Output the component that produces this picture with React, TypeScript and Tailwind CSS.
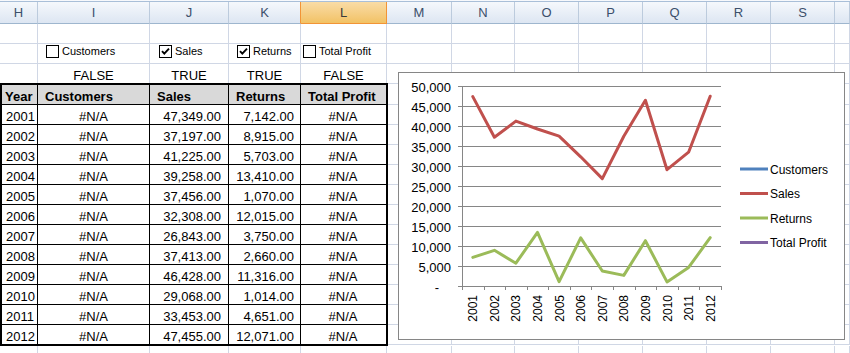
import React from "react";

const COL_W = ["w-[38px]", "w-[112px]", "w-[79px]", "w-[72px]", "w-[86px]", "w-[65px]", "w-[63px]", "w-[64px]", "w-[64px]", "w-[64px]", "w-[64px]", "w-[64px]", "w-[15px]"];
const LETTERS = ["H", "I", "J", "K", "L", "M", "N", "O", "P", "Q", "R", "S", ""];
// columns M..T next to the table block
const RIGHT_W = ["w-[64px]", "w-[63px]", "w-[64px]", "w-[64px]", "w-[64px]", "w-[64px]", "w-[64px]", "w-[15px]"];

const YEARS = [2001, 2002, 2003, 2004, 2005, 2006, 2007, 2008, 2009, 2010, 2011, 2012];
const SALES = [47349, 37197, 41225, 39258, 37456, 32308, 26843, 37413, 46428, 29068, 33453, 47455];
const RETURNS = [7142, 8915, 5703, 13410, 1070, 12015, 3750, 2660, 11316, 1014, 4651, 12071];

const money = (n: number) => n.toLocaleString("en-US", { minimumFractionDigits: 2, maximumFractionDigits: 2 });

function ColumnHeaders() {
    return (
        <div className="bg-[#f7f9fc] pt-px">
            <div className="flex h-[23px] border-t border-[#a9bfd8]">
                {LETTERS.map((l, i) => {
                    const selected = l === "L";
                    const beforeSel = l === "K";
                    return (
                        <div
                            key={i}
                            className={`${COL_W[i]} flex shrink-0 items-center justify-center border-b border-r text-[13px] ${
                                selected
                                    ? "border-[#f29436] bg-linear-to-b from-[#f9dca6] to-[#f2c264] text-[#3a3a3a]"
                                    : beforeSel
                                      ? "border-b-[#9eb6ce] border-r-[#f29436] bg-linear-to-b from-[#f5f8fc] to-[#dde6f2] text-[#3b4f6b]"
                                      : "border-b-[#9eb6ce] border-r-[#bccbdd] bg-linear-to-b from-[#f5f8fc] to-[#dde6f2] text-[#3b4f6b]"
                            }`}
                        >
                            {l}
                        </div>
                    );
                })}
            </div>
        </div>
    );
}

function Checkbox({ checked, label }: { checked: boolean; label: string }) {
    return (
        <div className="flex items-start">
            <div className="flex h-[13px] w-[13px] shrink-0 items-center justify-center border border-black bg-white">
                {checked && (
                    <svg width="11" height="11" viewBox="0 0 11 11">
                        <path d="M2 5.2 L4.3 7.6 L9 2.6" fill="none" stroke="#000" strokeWidth="1.9" />
                    </svg>
                )}
            </div>
            <span className="ml-[3px] whitespace-nowrap text-[11px] leading-[13px] text-black">{label}</span>
        </div>
    );
}

function EmptyRow({ widths, className }: { widths: string[]; className: string }) {
    return (
        <div className="flex">
            {widths.map((w, i) => (
                <div key={i} className={`${w} shrink-0 border-r border-[#d0d7e5] ${className}`} />
            ))}
        </div>
    );
}

function DataTable() {
    const cell = "flex shrink-0 items-end border-r border-black leading-[14px]";
    return (
        <div className="w-[388px] shrink-0 border-2 border-black text-[13px] text-black">
            <div className="flex h-[20px] border-b border-black bg-[#d9d9d9] font-bold">
                <div className={`${cell} w-[36px] pl-[3px]`}>Year</div>
                <div className={`${cell} w-[112px] pl-[7px]`}>Customers</div>
                <div className={`${cell} w-[79px] pl-[7px]`}>Sales</div>
                <div className={`${cell} w-[72px] pl-[7px]`}>Returns</div>
                <div className="flex w-[84px] shrink-0 items-end pl-[7px] leading-[14px]">Total Profit</div>
            </div>
            {YEARS.map((y, i) => (
                <div key={y} className={`flex ${i === YEARS.length - 1 ? "h-[19px]" : "h-[20px] border-b border-black"}`}>
                    <div className={`${cell} w-[36px] pl-[4px]`}>{y}</div>
                    <div className={`${cell} w-[112px] justify-center`}>#N/A</div>
                    <div className={`${cell} w-[79px] justify-end pr-[7px]`}>{money(SALES[i])}</div>
                    <div className={`${cell} w-[72px] justify-end pr-[6px]`}>{money(RETURNS[i])}</div>
                    <div className="flex w-[84px] shrink-0 items-end justify-center leading-[14px]">#N/A</div>
                </div>
            ))}
        </div>
    );
}

function Chart() {
    const yOf = (v: number) => 213 - v / 250;
    const xOf = (i: number) => 63 + 21.58 * (i + 0.5);
    const ticks = Array.from({ length: 11 }, (_, k) => k * 5000);
    const sales = SALES.map((v, i) => `${xOf(i).toFixed(1)},${yOf(v).toFixed(1)}`).join(" ");
    const returns = RETURNS.map((v, i) => `${xOf(i).toFixed(1)},${yOf(v).toFixed(1)}`).join(" ");
    const legend = [
        { name: "Customers", color: "#4f81bd" },
        { name: "Sales", color: "#c0504d" },
        { name: "Returns", color: "#9bbb59" },
        { name: "Total Profit", color: "#8064a2" },
    ];
    return (
        <div className="absolute left-[398px] top-[72px] h-[268px] w-[447px] border border-[#868686] bg-white">
            <svg width="445" height="266" fontFamily="'Liberation Sans', Arial, sans-serif">
                {ticks.map((v) => (
                    <g key={v}>
                        <line x1="59" x2="322" y1={yOf(v) + 0.5} y2={yOf(v) + 0.5} stroke="#868686" />
                        <text x={v === 0 ? 40 : 52} y={yOf(v) + 5.5} fontSize="13" textAnchor="end" fill="#000">
                            {v === 0 ? "-" : v.toLocaleString("en-US")}
                        </text>
                    </g>
                ))}
                <line x1="63.5" x2="63.5" y1="13" y2="217" stroke="#868686" />
                {Array.from({ length: 13 }, (_, i) => {
                    const x = Math.round(63 + 21.58 * i) + 0.5;
                    return <line key={i} x1={x} x2={x} y1="213" y2="217" stroke="#868686" />;
                })}
                {YEARS.map((y, i) => (
                    <text
                        key={y}
                        transform={`translate(${(xOf(i) + 4.5).toFixed(1)},222) rotate(-90)`}
                        fontSize="12"
                        textAnchor="end"
                        fill="#000"
                    >
                        {y}
                    </text>
                ))}
                <polyline points={sales} fill="none" stroke="#c0504d" strokeWidth="3" strokeLinejoin="round" strokeLinecap="round" />
                <polyline points={returns} fill="none" stroke="#9bbb59" strokeWidth="3" strokeLinejoin="round" strokeLinecap="round" />
                {legend.map((s, k) => {
                    const y = 96 + k * 24.5;
                    return (
                        <g key={s.name}>
                            <line x1="341" x2="369" y1={y} y2={y} stroke={s.color} strokeWidth="3" />
                            <text x="371" y={y + 4.5} fontSize="12" fill="#000">
                                {s.name}
                            </text>
                        </g>
                    );
                })}
            </svg>
        </div>
    );
}

export default function App() {
    return (
        <div className="relative h-[353px] w-[850px] overflow-hidden bg-white font-['Liberation_Sans',Arial,sans-serif]">
            <ColumnHeaders />

            <EmptyRow widths={COL_W} className="h-[20px] border-b" />

            {/* form checkboxes */}
            <div className="flex">
                {COL_W.map((w, i) => (
                    <div
                        key={i}
                        className={`${w} h-[20px] shrink-0 border-b border-r border-[#d0d7e5] pt-px ${
                            i === 1 ? "pl-[8px]" : i === 2 ? "pl-[9px]" : i === 3 ? "pl-[8px]" : i === 4 ? "pl-[2px]" : ""
                        }`}
                    >
                        {i === 1 && <Checkbox checked={false} label="Customers" />}
                        {i === 2 && <Checkbox checked label="Sales" />}
                        {i === 3 && <Checkbox checked label="Returns" />}
                        {i === 4 && <Checkbox checked={false} label="Total Profit" />}
                    </div>
                ))}
            </div>

            {/* linked cells */}
            <div className="flex">
                {COL_W.map((w, i) => (
                    <div
                        key={i}
                        className={`${w} flex h-[19px] shrink-0 items-end justify-center border-r border-[#d0d7e5] text-[13px] leading-[14px] text-black`}
                    >
                        {i === 1 ? "FALSE" : i === 2 || i === 3 ? "TRUE" : i === 4 ? "FALSE" : ""}
                    </div>
                ))}
            </div>

            <div className="flex">
                <DataTable />
                <div className="flex flex-col">
                    <EmptyRow widths={RIGHT_W} className="h-[22px] border-y" />
                    {YEARS.map((y) => (
                        <EmptyRow key={y} widths={RIGHT_W} className="h-[20px] border-b" />
                    ))}
                </div>
            </div>

            <EmptyRow widths={COL_W} className="h-[20px] border-b" />

            <Chart />
        </div>
    );
}
